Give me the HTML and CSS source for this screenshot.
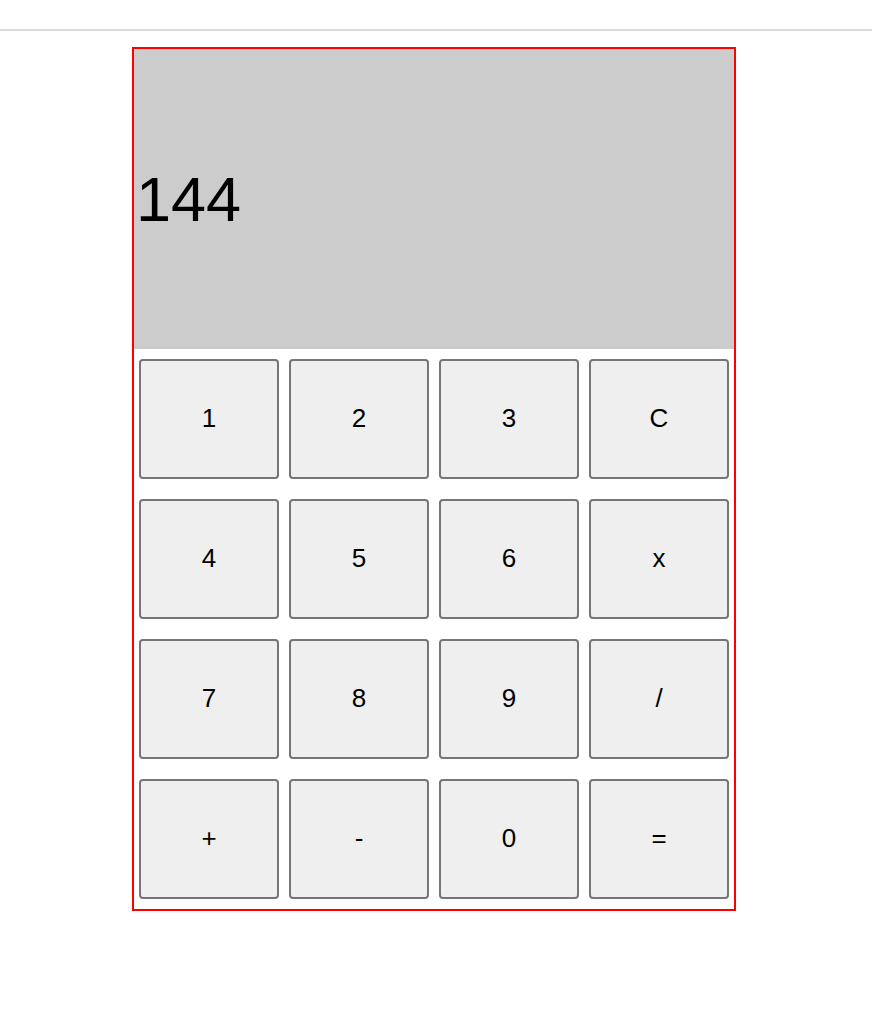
FILE: index.html
```html
<!DOCTYPE html>
<html lang="en">
<head>
    <meta charset="UTF-8">
    <meta name="viewport" content="width=device-width, initial-scale=1.0">
    <title>Calculator</title>
    <link rel="stylesheet" href="styles.css">
</head>
<body>

    <div class="topbar"></div>

    <div class="calculator">
        <!-- Display -->
        <div class="display" id="display">144</div>

        <!-- Keys -->
        <div class="keys">
            <button>1</button>
            <button>2</button>
            <button>3</button>
            <button>C</button>
            <button>4</button>
            <button>5</button>
            <button>6</button>
            <button>x</button>
            <button>7</button>
            <button>8</button>
            <button>9</button>
            <button>/</button>
            <button>+</button>
            <button>-</button>
            <button>0</button>
            <button>=</button>
        </div>
    </div>

</body>
</html>
```

FILE: styles.css
```css
body {
    margin: 0;
    padding: 0;
    font-family: "Liberation Sans", Arial, sans-serif;
    background-color: #fff;
}
.topbar {
    height: 29px;
    border-bottom: 2px solid #dadada;
}
.calculator {
    width: 600px;
    margin: 16px 0 0 132px;
    border: 2px solid #ff0000;
}
.display {
    height: 300px;
    display: flex;
    align-items: center;
    padding-left: 2px;
    background-color: #ccc;
    font-size: 63px;
    color: #000;
}
.keys {
    display: grid;
    grid-template-columns: repeat(4, 1fr);
}
.keys button {
    height: 120px;
    margin: 10px 5px;
    padding: 0 0 2px;
    background-color: #efefef;
    border: 2px solid #767676;
    border-radius: 4px;
    font-family: "Liberation Sans", Arial, sans-serif;
    font-size: 26px;
    color: #000;
}
```
